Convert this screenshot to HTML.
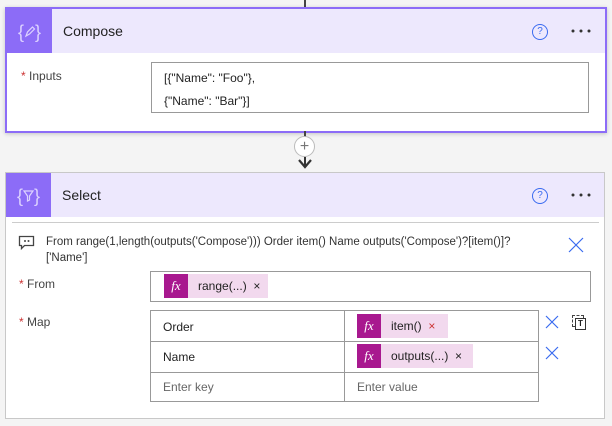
<html><head><style>
body{margin:0;width:612px;height:426px;background:#f4f4f4;font-family:"Liberation Sans",sans-serif;position:relative;overflow:hidden;font-size:12px;color:#222}
.a{position:absolute}
.card{position:absolute;left:5px;width:598px;background:#fff}
.hdr{position:absolute;left:0;top:0;right:0;height:44px;background:#ede8fd}
.ic{position:absolute;left:0;top:0;width:45px;height:44px;background:#8c6cf7}
.ttl{position:absolute;left:56px;top:14px;font-size:14px;color:#222}
.q{position:absolute;width:14px;height:14px;border:1.2px solid #3a6bf0;border-radius:50%;color:#3a6bf0;font-size:10px;text-align:center;line-height:14px}
.lbl{position:absolute;font-size:12px;color:#444}
.lbl b{color:#c33;font-weight:normal}
.box{position:absolute;border:1px solid #999;background:#fff}
.tok{position:absolute;height:24px;background:#f2d9ee;font-size:12px;line-height:24px}
.tok i{display:inline-block;width:24px;height:24px;background:#a8188f;color:#fff;font-family:"Liberation Serif",serif;text-align:center;margin-right:10px;font-size:13px}
.x{position:absolute}
</style></head><body>
<div class="a" style="left:304px;top:0;width:2px;height:7px;background:#444"></div>
<div class="card" style="top:7px;height:122px;border:2px solid #8c6cf7;box-shadow:0 1px 4px rgba(0,0,0,.2)">
 <div class="hdr"><div class="ic"><svg width="45" height="44"><text x="11" y="29" font-size="18" fill="#ddd3ff" font-family="Liberation Sans">{</text><text x="28" y="29" font-size="18" fill="#ddd3ff" font-family="Liberation Sans">}</text><path d="M19 27l1.5-4 5-5 2 2-5 5z" fill="none" stroke="#ddd3ff" stroke-width="1.2"/></svg></div><div class="ttl">Compose</div>
 <div class="q" style="left:525px;top:15px">?</div>
 <svg class="a" style="left:563px;top:19px" width="22" height="6"><circle cx="3" cy="3" r="1.5" fill="#333"/><circle cx="11" cy="3" r="1.5" fill="#333"/><circle cx="19" cy="3" r="1.5" fill="#333"/></svg></div>
 <div class="lbl" style="left:14px;top:60px"><b>*</b> Inputs</div>
 <div class="box" style="left:144px;top:53px;width:436px;height:49px;font-size:12px">
  <div class="a" style="left:12px;top:8px">[{"Name": "Foo"},</div>
  <div class="a" style="left:12px;top:31px">{"Name": "Bar"}]</div></div>
</div>
<div class="a" style="left:304px;top:131px;width:2px;height:6px;background:#444"></div>
<div class="a" style="left:294px;top:136px;width:19px;height:19px;border:1px solid #bbb;border-radius:50%;background:#fff;color:#777;text-align:center;line-height:19px;font-size:16px">+</div>
<svg class="a" style="left:297px;top:157px" width="16" height="14"><path d="M2 3l6 7 6-7" fill="none" stroke="#333" stroke-width="2.2"/><path d="M8 0v9" stroke="#333" stroke-width="2"/></svg>
<div class="card" style="top:172px;height:245px;border:1px solid #c8c8c8">
 <div class="hdr"><div class="ic"><svg width="45" height="44"><text x="11" y="29" font-size="18" fill="#ddd3ff" font-family="Liberation Sans">{</text><text x="28" y="29" font-size="18" fill="#ddd3ff" font-family="Liberation Sans">}</text><path d="M18 18h9l-3.5 5v4l-2 1v-5z" fill="none" stroke="#ddd3ff" stroke-width="1.2"/></svg></div><div class="ttl">Select</div>
 <div class="q" style="left:526px;top:15px">?</div>
 <svg class="a" style="left:564px;top:19px" width="22" height="6"><circle cx="3" cy="3" r="1.5" fill="#333"/><circle cx="11" cy="3" r="1.5" fill="#333"/><circle cx="19" cy="3" r="1.5" fill="#333"/></svg></div>
 <div class="a" style="left:6px;top:49px;width:587px;height:1px;background:#ccc"></div>
 <svg class="a" style="left:12px;top:62px" width="18" height="16"><path d="M1.5 1.5h14v9h-9l-3 3v-3h-2z" fill="none" stroke="#444" stroke-width="1.3"/><circle cx="7" cy="6" r="1" fill="#444"/><circle cx="10.5" cy="6" r="1" fill="#444"/></svg>
 <div class="a" style="left:40px;top:61px;font-size:11.5px;line-height:16px;color:#333;width:520px">From range(1,length(outputs('Compose'))) Order item() Name outputs('Compose')?[item()]?<br>['Name']</div>
 <svg class="x" style="left:562px;top:64px" width="16" height="16"><path d="M1 1l14 14M15 1L1 15" stroke="#3a6bf0" stroke-width="1.2"/></svg>
 <div class="lbl" style="left:13px;top:104px"><b>*</b> From</div>
 <div class="box" style="left:144px;top:98px;width:439px;height:29px">
  <div class="tok" style="left:13px;top:2px;padding-right:8px"><i>fx</i>range(...) &nbsp;×</div></div>
 <div class="lbl" style="left:13px;top:142px"><b>*</b> Map</div>
 <div class="box" style="left:144px;top:137px;width:387px;height:90px">
  <div class="a" style="left:193px;top:0;width:1px;height:90px;background:#999"></div>
  <div class="a" style="left:0;top:30px;width:387px;height:1px;background:#999"></div>
  <div class="a" style="left:0;top:61px;width:387px;height:1px;background:#999"></div>
  <div class="a" style="left:12px;top:9px">Order</div>
  <div class="a" style="left:12px;top:39px">Name</div>
  <div class="a" style="left:12px;top:69px;color:#666">Enter key</div>
  <div class="tok" style="left:206px;top:3px;width:91px"><i>fx</i>item() &nbsp;<span style="color:#c33">×</span></div>
  <div class="tok" style="left:206px;top:33px;width:116px"><i>fx</i>outputs(...) &nbsp;×</div>
  <div class="a" style="left:206px;top:69px;color:#666">Enter value</div>
 </div>
 <svg class="x" style="left:539px;top:142px" width="14" height="14"><path d="M1 1l12 12M13 1L1 13" stroke="#3a6bf0" stroke-width="1.2"/></svg>
 <svg class="x" style="left:539px;top:173px" width="14" height="14"><path d="M1 1l12 12M13 1L1 13" stroke="#3a6bf0" stroke-width="1.2"/></svg>
 <div class="a" style="left:566px;top:142px;width:10px;height:10px;border:1px dashed #444"></div>
 <div class="a" style="left:569px;top:145px;width:9px;height:10px;border:1.3px solid #333;background:#fff;font-size:8px;line-height:10px;text-align:center;font-weight:bold">T</div>
</div>
</body></html>
